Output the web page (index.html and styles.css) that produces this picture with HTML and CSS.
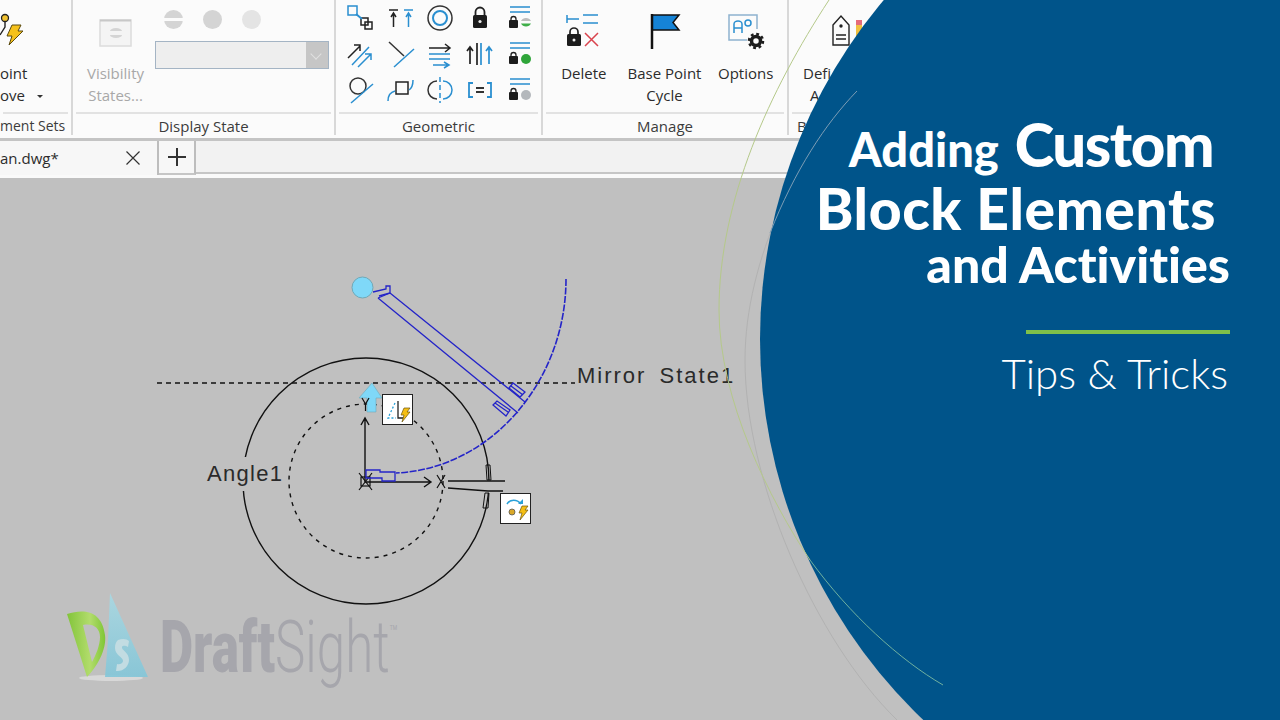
FILE: index.html
```html
<!DOCTYPE html>
<html lang="en">
  <head>
    <meta charset="UTF-8" />
    <title>Adding Custom Block Elements and Activities</title>
    <link rel="stylesheet" href="styles.css">
  </head>
  <body>
    <div class="page">
      <div class="ribbon">
        <div class="group group-sets">
          <div class="group-body">
            <div class="tool tool-point">
              <svg class="tool-icon" width="30" height="40" viewBox="0 0 30 40">
                <path d="M5 9v6l-5 8" fill="none" stroke="#222" stroke-width="1.4"/>
                <circle cx="5" cy="6" r="3.5" fill="#f2c230" stroke="#222" stroke-width="1.3"/>
                <path d="M12 13h9l-3 6h5L9 33l3-9H7z" fill="#f5c11c" stroke="#5a4a10" stroke-width="1"/>
              </svg>
              <span class="tool-label">oint</span>
              <span class="tool-label">ove <i class="caret"></i></span>
            </div>
          </div>
          <div class="group-title">ment Sets</div>
        </div>

        <div class="group group-display">
          <div class="group-body">
            <div class="tool tool-muted">
              <svg class="tool-icon" width="34" height="40" viewBox="0 0 34 40">
                <rect x="1" y="8" width="31" height="26" fill="#f4f4f4" stroke="#dcdcdc" stroke-width="1.5"/>
                <path d="M1 8.5h31" stroke="#c8c8c8" stroke-width="2"/>
                <path d="M11 19a6 3 0 0 1 12 0zM11 23h12a6 3 0 0 1-12 0z" fill="#d4d4d4"/>
              </svg>
              <span class="tool-label">Visibility</span>
              <span class="tool-label">States...</span>
            </div>
            <div class="state">
              <div class="state-dots">
                <span class="dot dot-split"></span>
                <span class="dot dot-dark"></span>
                <span class="dot dot-light"></span>
              </div>
              <div class="combo"><span class="combo-arrow"></span></div>
            </div>
          </div>
          <div class="group-title">Display State</div>
        </div>

        <div class="group group-geo">
          <div class="group-body">
            <div class="geo-grid">
              <svg width="30" height="30" viewBox="0 0 30 30" fill="none" stroke-width="1.5"><rect x="2" y="3" width="9" height="9" stroke="#2a8fd0"/><rect x="15" y="15" width="7" height="7" stroke="#222"/><rect x="19" y="19" width="7" height="7" stroke="#222"/><path d="M10 11l6 5" stroke="#2a8fd0" stroke-width="2"/></svg>
              <svg width="30" height="30" viewBox="0 0 30 30" fill="none" stroke-width="1.5"><path d="M3 7h9" stroke="#222"/><path d="M7.5 24V11M5 14l2.500-4 2.500 4" stroke="#222"/><path d="M18 7h9" stroke="#2a8fd0"/><path d="M22.5 24V11M20 14l2.500-4 2.500 4" stroke="#2a8fd0"/></svg>
              <svg width="30" height="30" viewBox="0 0 30 30" fill="none"><circle cx="15" cy="15" r="12" stroke="#333" stroke-width="1.5"/><circle cx="15" cy="15" r="7" stroke="#2a8fd0" stroke-width="2"/></svg>
              <svg width="30" height="30" viewBox="0 0 30 30" fill="none"><path d="M10.5 13V9a4.500 4.500 0 0 1 9 0v4" stroke="#222" stroke-width="1.8"/><rect x="8" y="12" width="14" height="13" rx="1.5" fill="#1c1c1c"/><circle cx="15" cy="18.5" r="1.6" fill="#eee"/></svg>
              <svg width="30" height="30" viewBox="0 0 30 30" fill="none"><path d="M6 4h20M6 9h20" stroke="#2a8fd0" stroke-width="1.5"/><path d="M7 18v-2a2.500 2.500 0 0 1 5 0v2" stroke="#222" stroke-width="1.3"/><rect x="5" y="17" width="9" height="8" rx="1" fill="#1c1c1c"/><path d="M17 18a5.500 5 0 0 1 10 0z" fill="#bdbdbd"/><path d="M17 20.5h10a5.500 5 0 0 1-10 0z" fill="#3fae49"/></svg>

              <svg width="30" height="30" viewBox="0 0 30 30" fill="none" stroke-width="1.5"><path d="M2 19L14 7M8 6h6v6" stroke="#222"/><path d="M6 26L23 8M12 28l13-13M19 15h6v6" stroke="#2a8fd0"/></svg>
              <svg width="30" height="30" viewBox="0 0 30 30" fill="none" stroke-width="1.5"><path d="M3 3l15 14" stroke="#333"/><path d="M8 28L28 10" stroke="#2a8fd0"/></svg>
              <svg width="30" height="30" viewBox="0 0 30 30" fill="none" stroke-width="1.5"><path d="M4 9h20M20 5l5 4-5 4" stroke="#222"/><path d="M4 15h21M4 20h21" stroke="#2a8fd0"/><path d="M8 26h15M19 23l5 3-5 3" stroke="#2a8fd0"/></svg>
              <svg width="30" height="30" viewBox="0 0 30 30" fill="none" stroke-width="1.7"><path d="M5 25V8M2 12l3-4 3 4" stroke="#222"/><path d="M12 4v22" stroke="#222"/><path d="M16 4v22" stroke="#2a8fd0"/><path d="M24 25V8M21 12l3-4 3 4" stroke="#2a8fd0"/></svg>
              <svg width="30" height="30" viewBox="0 0 30 30" fill="none"><path d="M6 4h20M6 9h20" stroke="#2a8fd0" stroke-width="1.5"/><path d="M7 18v-2a2.500 2.500 0 0 1 5 0v2" stroke="#222" stroke-width="1.3"/><rect x="5" y="17" width="9" height="8" rx="1" fill="#1c1c1c"/><circle cx="22" cy="20" r="5" fill="#2fa53a"/></svg>

              <svg width="30" height="30" viewBox="0 0 30 30" fill="none" stroke-width="1.5"><circle cx="12" cy="11" r="8" stroke="#333"/><path d="M5 28L27 9" stroke="#2a8fd0"/></svg>
              <svg width="30" height="30" viewBox="0 0 30 30" fill="none" stroke-width="1.5"><rect x="10" y="7" width="12" height="12" stroke="#222"/><path d="M2 26c0-6 3-9 7-10M23 15c3-2 4-5 4-10" stroke="#2a8fd0"/></svg>
              <svg width="30" height="30" viewBox="0 0 30 30" fill="none" stroke-width="1.5"><path d="M12 6a9 9 0 0 0 0 18" stroke="#333"/><path d="M18 6a9 9 0 0 1 0 18" stroke="#2a8fd0"/><path d="M15 2v26" stroke="#2a8fd0" stroke-dasharray="5 3"/></svg>
              <svg width="30" height="30" viewBox="0 0 30 30" fill="none" stroke="#2a8fd0" stroke-width="1.8"><path d="M8 8H4v14h4M22 8h4v14h-4"/><path d="M11 13h8M11 17h8" stroke="#333"/></svg>
              <svg width="30" height="30" viewBox="0 0 30 30" fill="none"><path d="M6 4h20M6 9h20" stroke="#2a8fd0" stroke-width="1.5"/><path d="M7 18v-2a2.500 2.500 0 0 1 5 0v2" stroke="#222" stroke-width="1.3"/><rect x="5" y="17" width="9" height="8" rx="1" fill="#1c1c1c"/><circle cx="22" cy="20" r="5" fill="#b4b8bc"/></svg>
            </div>
          </div>
          <div class="group-title">Geometric</div>
        </div>

        <div class="group group-manage">
          <div class="group-body">
            <div class="tool tool-delete">
              <svg class="tool-icon" width="36" height="40" viewBox="0 0 36 40" fill="none"><path d="M1 3v8M1 7h12" stroke="#2a8fd0" stroke-width="1.5"/><path d="M17 3h15M17 11h15" stroke="#2a8fd0" stroke-width="1.5"/><path d="M4 22v-2a4 4 0 0 1 8 0v2" stroke="#222" stroke-width="1.7"/><rect x="1" y="22" width="14" height="12" rx="1.5" fill="#1c1c1c"/><circle cx="8" cy="28" r="1.5" fill="#eee"/><path d="M19 21l13 13M32 21L19 34" stroke="#d9434d" stroke-width="1.5"/></svg>
              <span class="tool-label">Delete</span>
            </div>
            <div class="tool tool-cycle">
              <svg class="tool-icon" width="36" height="40" viewBox="0 0 36 40"><path d="M5 3h27l-6 7.500 6 7.500H5z" fill="#1583d6" stroke="#111" stroke-width="1.5"/><path d="M5 2v35" stroke="#111" stroke-width="2.5"/></svg>
              <span class="tool-label">Base Point</span>
              <span class="tool-label">Cycle</span>
            </div>
            <div class="tool tool-options">
              <svg class="tool-icon" width="38" height="40" viewBox="0 0 38 40" fill="none"><path d="M20 28H2V3h28v14" stroke="#8fb3cf" stroke-width="1.5"/><path d="M7 21V12a4 3 0 0 1 8 0v9M7 16h8" stroke="#2a8fd0" stroke-width="1.5"/><circle cx="21" cy="11" r="3" stroke="#2a8fd0" stroke-width="1.5"/><circle cx="29" cy="29" r="4.5" stroke="#1c1c1c" stroke-width="3.5"/><circle cx="29" cy="29" r="7" stroke="#1c1c1c" stroke-width="2.5" stroke-dasharray="2.8 2.7"/></svg>
              <span class="tool-label">Options</span>
            </div>
          </div>
          <div class="group-title">Manage</div>
        </div>

        <div class="group group-last">
          <div class="group-body">
            <div class="tool tool-define">
              <svg class="tool-icon" width="36" height="40" viewBox="0 0 36 40" fill="none"><path d="M1 13L9 4l8 9v20H1z" stroke="#222" stroke-width="1.4"/><circle cx="9" cy="14" r="1.7" fill="#222"/><path d="M4 23h10M4 27h10" stroke="#222" stroke-width="1.3"/><rect x="24" y="8" width="6" height="5" fill="#e56a7a"/><rect x="24" y="13" width="6" height="17" fill="#f0c040"/></svg>
              <span class="tool-label label-defi">Defi</span>
              <span class="tool-label label-a">A</span>
            </div>
          </div>
          <div class="group-title">B</div>
        </div>
      </div>

      <div class="tabs">
        <div class="tab">
          <span class="tab-name">an.dwg*</span>
          <svg width="16" height="16" viewBox="0 0 16 16"><path d="M1.5 1.5l13 13M14.5 1.5l-13 13" stroke="#333" stroke-width="1.2"/></svg>
        </div>
        <div class="tab-add">
          <svg width="20" height="20" viewBox="0 0 20 20"><path d="M10 1v18M1 10h18" stroke="#333" stroke-width="2"/></svg>
        </div>
        <div class="tab-rest"></div>
      </div>

      <div class="canvas">
        <svg class="drawing" width="1280" height="542" viewBox="0 178 1280 542" fill="none">
          <!-- black geometry -->
          <circle cx="366" cy="481" r="123" stroke="#111" stroke-width="1.4"/>
          <circle cx="366" cy="481" r="77" stroke="#111" stroke-width="1.4" stroke-dasharray="4 5"/>
          <rect x="482" y="480" width="10" height="13" fill="#c0c0c0"/>
          <path d="M157 383H575" stroke="#111" stroke-width="1.4" stroke-dasharray="5 4"/>
          <path d="M365 482V418M361 425l4-7 4 7M365 482H431M424 477l7 5-7 5" stroke="#111" stroke-width="1.4"/>
          <path d="M359 473l13 17M372 473l-13 17M437 475l8 13M445 475l-8 13" stroke="#111" stroke-width="1.2"/>
          <rect x="361" y="477" width="9" height="9" stroke="#111" stroke-width="1.2"/>
          <path d="M448 481H505M448 488l40 3H503" stroke="#111" stroke-width="1.4"/>
          <path d="M486 465h4l1 15h-4zM485 493h4l-1 15h-5z" stroke="#111" stroke-width="1"/>
          <!-- blue block -->
          <g stroke="#2424c8" stroke-width="1.3">
            <path d="M566 279C566 382 490 469 396 473" stroke-width="1.6" stroke-dasharray="7 1.500"/>
            <path d="M390 293L525 402M378 298L518 413M378 298l12-5"/>
            <path d="M373 292l13-3v-3h4v7l-11 3M366 474l0-4h14v2h15v9h-13v-3h-16z"/>
            <path d="M509 388l4-5 12 9-5 5zM511 386l12 9M493 405l4-4 13 9-4 6zM495 403l13 9"/>
          </g>
          <circle cx="362.5" cy="287.5" r="10.5" fill="#7fd8f8" stroke="#6fa9b8" stroke-width="1"/>
          <path d="M372 383L382 398h-6v14h-9v-14h-8z" fill="#7fd8f8" stroke="#6fa9b8" stroke-width=".6"/>
          <path d="M362 398l3.500 6 3.500-6M365.5 404v7" stroke="#111" stroke-width="1.2"/>
        </svg>

        <div class="tag tag-mirror">Mirror State1</div>
        <div class="tag tag-angle">Angle1</div>

        <div class="action action-mirror">
          <svg width="28" height="28" viewBox="0 0 28 28" fill="none"><path d="M11 7L4 22h8" stroke="#29a0d8" stroke-width="1.3" stroke-dasharray="2 2"/><path d="M14 5v17h6" stroke="#222" stroke-width="1.3"/><path d="M20 12h6l-3 4h3l-8 10 2-7h-3z" fill="#f5bf14" stroke="#6a5410" stroke-width=".7"/></svg>
        </div>
        <div class="action action-rotate">
          <svg width="28" height="28" viewBox="0 0 28 28" fill="none"><path d="M5 9c3-5 10-5 14 0" stroke="#29a0d8" stroke-width="1.5"/><path d="M16 9h5V4z" fill="#29a0d8"/><circle cx="10" cy="17" r="3" fill="#d9a828" stroke="#555" stroke-width=".8"/><path d="M20 11h6l-3 4h3l-8 10 2-7h-3z" fill="#f5bf14" stroke="#6a5410" stroke-width=".7"/></svg>
        </div>

        <div class="logo">
          <svg class="logo-mark" width="84" height="92" viewBox="0 0 84 92">
            <defs>
              <linearGradient id="sailFill" x1="0" y1="0" x2="0" y2="1">
                <stop offset="0" stop-color="#a9d8e2"/>
                <stop offset="1" stop-color="#84c6d8"/>
              </linearGradient>
              <linearGradient id="dFill" x1="0" y1="0" x2="1" y2="0">
                <stop offset="0" stop-color="#82c43a"/>
                <stop offset=".6" stop-color="#b2dc6c"/>
                <stop offset="1" stop-color="#7fc636"/>
              </linearGradient>
            </defs>
            <ellipse cx="45" cy="88" rx="32" ry="3" fill="#d8d8d8"/>
            <path fill-rule="evenodd" d="M1 24C20 18 36 22 39 45 41 60 30 78 21 87zM17 35C27 33 34 38 34 47 34 55 30 65 26 72z" fill="url(#dFill)"/>
            <path d="M44 3L82 87H39L42 50z" fill="url(#sailFill)" fill-opacity=".92"/>
            <path d="M52 50c5-2 9-1 11 1l-1 6c-2-1-5-2-6 0-1 3 7 5 7 13 0 6-6 12-13 11l1-7c3 1 6-1 6-3 0-4-8-6-8-13 0-4 1-6 3-8z" fill="#c2dce2"/>
          </svg>
          <div class="logo-word"><b>Draft</b><span>Sight</span><sup>TM</sup></div>
        </div>
      </div>

      <div class="panel">
        <svg class="panel-shape" width="1280" height="720" viewBox="0 0 1280 720" fill="none">
          <path d="M857 91C800 150 745 260 745 360 745 480 815 640 897 720" stroke="#b2b2b2" stroke-width="1"/>
          <circle cx="1286" cy="339" r="526" fill="#00548a"/>
          <path d="M857 91C825 124 795 170 770 233" stroke="#7c9db5" stroke-width="1"/>
          <path d="M829 0C770 90 719 200 719 310 719 400 770 500 810 560" stroke="#b5c98a" stroke-width="1"/>
          <path d="M810 560C850 615 900 660 943 685" stroke="#6fb0a0" stroke-width="1"/>
        </svg>
        <div class="headline">
          <div class="line-one"><span class="small">Adding</span> <span class="big">Custom</span></div>
          <div class="line-two">Block Elements</div>
          <div class="line-three">and Activities</div>
          <div class="rule"></div>
          <div class="line-sub">Tips &amp; Tricks</div>
        </div>
      </div>
    </div>
  </body>
</html>
```
FILE: styles.css
```css
* {
  margin: 0;
  padding: 0;
  box-sizing: border-box;
}

body {
  width: 1280px;
  height: 720px;
  overflow: hidden;
  font-family: "Open Sans", "Liberation Sans", sans-serif;
}

.page {
  position: relative;
  display: flex;
  flex-direction: column;
  width: 1280px;
  height: 720px;
  overflow: hidden;
  background-color: #c0c0c0;
}

/* ribbon */
.ribbon {
  display: flex;
  height: 141px;
  background-color: #fbfbfb;
  border-bottom: 3px solid #c4c4c4;
  flex-shrink: 0;
}

.group {
  display: flex;
  flex-direction: column;
  height: 135px;
  border-right: 2px solid #d8d8d8;
}

.group-sets { width: 73px; }
.group-display { width: 263px; }
.group-geo { width: 207px; }
.group-manage { width: 246px; }
.group-last { flex: 1; border-right: 0; }

.group-body {
  display: flex;
  height: 114px;
  margin: 0 3px;
  border-bottom: 2px solid #e2e2e2;
}

.group-title {
  padding-top: 3px;
  text-align: center;
  font-size: 15px;
  line-height: 18px;
  color: #3c3c3c;
}

.group-sets .group-title {
  padding-right: 8px;
  font-size: 14px;
  text-align: right;
  white-space: nowrap;
}

.group-last .group-title {
  padding-left: 8px;
  text-align: left;
}

.tool {
  display: flex;
  flex-direction: column;
  align-items: center;
  padding-top: 12px;
  font-size: 15px;
  line-height: 22px;
  color: #2c2c2c;
}

.tool-icon {
  height: 40px;
  margin-bottom: 10px;
  flex-shrink: 0;
}

.tool-label {
  white-space: nowrap;
}

.tool-point {
  width: 100%;
  margin-left: -3px;
  align-items: flex-start;
}

.tool-muted {
  width: 79px;
  color: #a8a8a8;
}

.caret {
  display: inline-block;
  margin-left: 8px;
  vertical-align: middle;
  border-top: 3px solid #333;
  border-left: 3px solid transparent;
  border-right: 3px solid transparent;
}

.state {
  display: flex;
  flex-direction: column;
  gap: 12px;
  padding-top: 10px;
}

.state-dots {
  display: flex;
  gap: 20px;
  padding-left: 9px;
}

.dot {
  width: 19px;
  height: 19px;
  border-radius: 50%;
  background-color: #d4d4d4;
}

.dot-split {
  background: linear-gradient(#d4d4d4 42%, #fbfbfb 42%, #fbfbfb 58%, #d4d4d4 58%);
}

.dot-light {
  background-color: #e4e4e4;
}

.combo {
  display: flex;
  justify-content: flex-end;
  width: 174px;
  height: 28px;
  background-color: #eeeeee;
  border: 1px solid #a4b4c4;
}

.combo-arrow {
  position: relative;
  width: 22px;
  background-color: #c6c6c6;
}

.combo-arrow::after {
  content: "";
  position: absolute;
  top: 8px;
  left: 6px;
  width: 7px;
  height: 7px;
  border-right: 1px solid #e0e0e0;
  border-bottom: 1px solid #e0e0e0;
  transform: rotate(45deg);
}

.geo-grid {
  display: grid;
  grid-template-columns: repeat(5, 30px);
  grid-auto-rows: 36px;
  column-gap: 9.5px;
  padding: 3px 0 0 7px;
}

.tool-delete {
  width: 76px;
}

.tool-cycle {
  width: 86px;
}

.tool-options {
  width: 77px;
}

.tool-define {
  width: 100%;
  align-items: flex-start;
}

.tool-define .tool-icon {
  margin-left: 40px;
}

.label-defi {
  margin-left: 11px;
}

.label-a {
  margin-left: 18px;
}

/* tab bar */
.tabs {
  display: flex;
  align-items: flex-start;
  height: 37px;
  background-color: #fafafa;
  flex-shrink: 0;
}

.tab {
  display: flex;
  align-items: center;
  justify-content: space-between;
  width: 159px;
  height: 34px;
  padding: 0 16px 0 0;
  background-color: #f7f7f7;
  border-right: 2px solid #bdbdbd;
  font-size: 15px;
  color: #2c2c2c;
}

.tab-add {
  display: flex;
  align-items: center;
  justify-content: center;
  width: 37px;
  height: 34px;
  background-color: #f7f7f7;
  border-right: 2px solid #bdbdbd;
  border-bottom: 2px solid #c6c6c6;
}

.tab-rest {
  flex: 1;
  height: 33px;
  background-color: #f2f2f2;
  border-bottom: 2px solid #c6c6c6;
}

/* drawing area */
.canvas {
  position: relative;
  flex: 1;
}

.drawing {
  position: absolute;
  top: 0;
  left: 0;
}

.tag {
  position: absolute;
  font-family: "Liberation Sans", sans-serif;
  font-size: 22px;
  line-height: 26px;
  letter-spacing: 1.3px;
  color: #2a2a2a;
  white-space: nowrap;
}

.tag-mirror {
  top: 185px;
  left: 577px;
  letter-spacing: 2px;
  word-spacing: 5px;
}

.tag-angle {
  top: 279px;
  left: 207px;
  padding: 4px 0;
  background-color: #c0c0c0;
}

.action {
  position: absolute;
  display: flex;
  align-items: center;
  justify-content: center;
  width: 31px;
  height: 31px;
  background-color: #ffffff;
  border: 1px solid #222;
}

.action-mirror {
  top: 216px;
  left: 382px;
}

.action-rotate {
  top: 315px;
  left: 500px;
}

.logo {
  position: absolute;
  top: 412px;
  left: 66px;
  display: flex;
  align-items: flex-end;
}

.logo-mark {
  flex-shrink: 0;
}

.logo-word {
  position: relative;
  margin: 0 0 2px 10px;
  font-family: Roboto, "Liberation Sans", sans-serif;
  font-size: 72px;
  line-height: 64px;
  color: #a6a6ac;
  white-space: nowrap;
  transform: scaleX(.71);
  transform-origin: left bottom;
}

.logo-word b {
  font-weight: 900;
}

.logo-word span {
  font-weight: 300;
}

.logo-word sup {
  position: absolute;
  top: 8px;
  font-size: 7px;
  line-height: 8px;
}

/* blue title panel */
.panel {
  position: absolute;
  top: 0;
  left: 0;
  width: 1280px;
  height: 720px;
}

.panel-shape {
  position: absolute;
  top: 0;
  left: 0;
}

.headline {
  position: absolute;
  top: 121px;
  right: 50px;
  display: flex;
  flex-direction: column;
  align-items: flex-end;
  color: #ffffff;
  font-family: Lato, "Open Sans", sans-serif;
  font-weight: 900;
  font-variant-ligatures: none;
  white-space: nowrap;
}

.line-one {
  margin-right: 17px;
  line-height: 46px;
}

.small {
  font-size: 47px;
}

.big {
  margin-left: 12px;
  font-size: 60px;
  letter-spacing: -1.5px;
}

.line-two {
  margin-right: 14px;
  font-size: 57px;
  letter-spacing: .6px;
  line-height: 48px;
}

.line-three {
  font-size: 50px;
  line-height: 64px;
}

.rule {
  width: 204px;
  height: 4px;
  margin-top: 34px;
  background-color: #7fc04a;
}

.line-sub {
  margin-top: 11px;
  margin-right: 2px;
  font-size: 42px;
  font-weight: 300;
  line-height: 56px;
}
```
